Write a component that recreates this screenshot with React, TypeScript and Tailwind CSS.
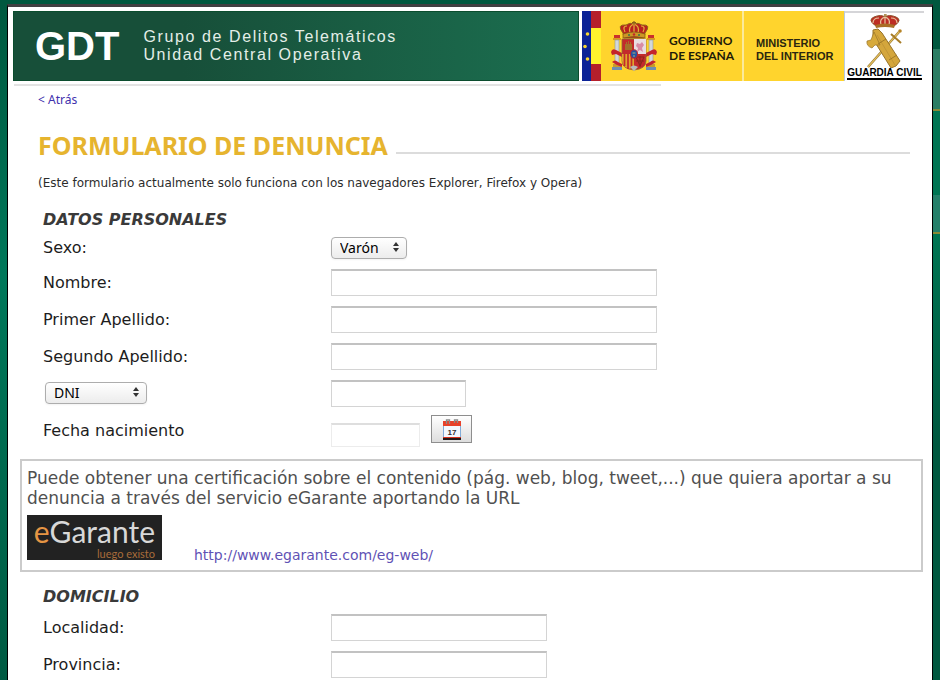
import type { ReactNode } from "react";

function SpainArms() {
  return (
    <svg viewBox="0 0 46 50" className="h-[50px] w-[46px] shrink-0" aria-hidden="true">
      {/* columns of Hercules */}
      {[3, 37].map((x) => (
        <g key={x}>
          <rect x={x} y="14" width="6" height="3" fill="#c9302c" />
          <rect x={x - 1} y="17" width="8" height="2" fill="#d99a1c" />
          <rect x={x + 1} y="19" width="4" height="26" fill="#d3d8da" stroke="#8d979b" strokeWidth=".6" />
          <rect x={x - 1} y="43" width="8" height="3" fill="#c79a2c" />
          <rect x={x - 2} y="46" width="10" height="3" fill="#6f8fb0" />
        </g>
      ))}
      <path d="M0 31q1-4 5-2l6 3v4l-6-3-4 1zM46 31q-1-4-5-2l-6 3v4l6-3 4 1z" fill="#c4242c" />
      <path d="M1 41q3-3 6 0l4 2v3l-5-2zM45 41q-3-3-6 0l-4 2v3l5-2z" fill="#c4242c" />
      {/* crown */}
      <path d="M12 12Q5 3 15 4q4-3 8-1 4-2 8 1 10-1 3 8l-1 5H13z" fill="#b9211f" stroke="#92671a" strokeWidth="1" />
      <path d="M14 11Q11 5 16 5m3 7q-2-7 4-9 6 2 4 9m5-1q3-6-2-6M23 3v9" fill="none" stroke="#e4b13a" strokeWidth="1.2" />
      <path d="M23 0v4M21 1.500h4" stroke="#8b6118" strokeWidth="1.200" />
      <path d="M12 13q11-4 22 0v4q-11-3-22 0z" fill="#cc9626" stroke="#7d5513" strokeWidth=".7" />
      <circle cx="18" cy="14" r="1" fill="#327a4b" />
      <circle cx="23" cy="13.500" r="1.200" fill="#c4242c" />
      <circle cx="28" cy="14" r="1" fill="#327a4b" />
      {/* shield */}
      <path d="M11 18h24v22q0 8-12 9-12-1-12-9z" fill="#c32a2b" stroke="#8d6a3c" strokeWidth=".8" />
      <path d="M23 18h12v15H23z" fill="#e9dde2" />
      <path d="M26 22l3 1 2-2 2 3-2 3 1 4-3-2-3 2 1-4-2-2z" fill="#d88ca6" />
      <path d="M14 29v-6h1v-2h1v2h1v-3h1v3h1v-2h1v2h1v6z" fill="#a3702b" />
      <path d="M11 33h12v15.500q-12-1-12-9z" fill="#dfa52c" />
      <path d="M13.500 33v12M17 33v15M20.500 33v15" stroke="#c32a2b" strokeWidth="1.700" />
      <path d="M25 36h8l-4 9zM29 35v11M25 40h8" fill="none" stroke="#8a271d" strokeWidth="1" />
      <path d="M19 46q4-3 8 0l-4 4z" fill="#b9b9b9" />
      <ellipse cx="23" cy="33" rx="3.500" ry="4.200" fill="#2154a4" stroke="#c4242c" />
      <path d="M21.500 32h3M22 35h2" stroke="#dac66c" strokeWidth=".8" />
    </svg>
  );
}

function GuardiaEmblem() {
  return (
    <svg viewBox="0 0 40 54" className="h-[54px] w-10" aria-hidden="true">
      {/* crown */}
      <path d="M11 12Q2 6 9 3q7-3 11 0 4-3 11 0 7 3-2 9z" fill="#bd2e24" stroke="#8f542e" strokeWidth="1" />
      <path d="M8 9q0-5 6-5m2 7q-2-6 4-8 6 2 4 8m2-7q6 0 6 5M20 3v8" fill="none" stroke="#e6c6a0" strokeWidth="1.200" />
      <path d="M20 0v3M19 1h3" stroke="#977023" />
      <path d="M10 11q10-3 20 0l-1 3q-9-2-18 0z" fill="#a96e25" />
      {/* sword */}
      <path d="M34 18L3 53" stroke="#8e6a24" strokeWidth="2.400" />
      <path d="M34 18L3 53" stroke="#e0bd5c" strokeWidth="1.300" />
      <path d="M26 20l10 9" stroke="#a77c26" strokeWidth="2" />
      <circle cx="35" cy="17" r="1.800" fill="#b68427" />
      {/* fasces and axe */}
      <path d="M8 16l5-1 4 4 18 28-4 5-5 2L8 25z" fill="#d4a63c" stroke="#98742a" strokeWidth="1" />
      <path d="M12 21l18 30" stroke="#b48a30" strokeWidth=".6" />
      <path d="M9 18l-3 8-4 1q-1 5 5 7l3-3 5 0z" fill="#d7aa3b" stroke="#98742a" strokeWidth=".7" />
      <path d="M13 30l8-5M24 46l8-5" stroke="#a07a28" strokeWidth="1" />
    </svg>
  );
}

function CalendarIcon() {
  return (
    <svg viewBox="0 0 18 21" className="h-[21px] w-[18px]" aria-hidden="true">
      <rect x=".5" y="2.500" width="17" height="18" fill="#f4f9ff" stroke="#82acd8" />
      <path d="M0 2h18v5H0z" fill="#e8412a" />
      <path d="M0 18h18v1H0z" fill="#d9331f" />
      <path d="M0 19h18v2H0z" fill="#241a1a" />
      <path d="M3.500 5V1h3v4M11.500 4V1h3v3" fill="none" stroke="#8b8b8b" strokeWidth="1.300" />
      <text x="9" y="16" textAnchor="middle" fontFamily="Liberation Sans, sans-serif" fontWeight="700" fontSize="8" fill="#333">
        17
      </text>
    </svg>
  );
}

function Header() {
  return (
    <header className="mr-2 ml-[5px] flex h-[70px] gap-[3px] font-['Liberation_Sans',Arial,sans-serif]">
      <div className="flex min-w-0 flex-1 items-center gap-6 border border-[#0b4d2e] bg-linear-to-r from-[#174f39] from-30% to-[#1b6f50] pl-[21px] text-white">
        <span className="text-[40px] leading-10 font-bold">GDT</span>
        <p className="text-base leading-[18px] tracking-widest whitespace-nowrap text-[#e4eee8]">
          Grupo de Delitos Telemáticos
          <br />
          Unidad Central Operativa
        </p>
      </div>
      <div className="flex">
        <div className="w-[9px] bg-[#0b2296]">
          <svg viewBox="0 0 9 70" className="h-[70px] w-[9px]" aria-hidden="true">
            <g fill="#f7d531">
              <circle cx="5.500" cy="23" r="1.800" />
              <circle cx="3" cy="35.500" r="1.800" />
              <circle cx="5.500" cy="48" r="1.800" />
            </g>
          </svg>
        </div>
        <div className="w-[10px] border-y-[17px] border-[#b51f2b] bg-[#fff22d]" />
        <div className="flex w-[143px] items-center border-r-2 border-[#fbea9b] bg-[#ffd42d] pl-[10px]">
          <SpainArms />
          <span className="pt-1 pl-3 font-['Lato',sans-serif] text-xs leading-[15px] font-bold whitespace-nowrap text-[#1d1a08]">
            GOBIERNO
            <br />
            DE ESPAÑA
          </span>
        </div>
        <div className="flex w-[101px] items-center border-r border-[#b9cbe0] bg-[#ffd42d] pt-2 pl-3 text-[11px] leading-[13px] font-bold whitespace-nowrap text-[#2b270f]">
          MINISTERIO
          <br />
          DEL INTERIOR
        </div>
        <div className="flex w-[79px] flex-col items-center border-t-2 border-[#d5d5d8] pt-px">
          <GuardiaEmblem />
          <span className="border-b-2 border-black text-[10px] leading-[10px] font-bold whitespace-nowrap text-black">GUARDIA CIVIL</span>
        </div>
      </div>
    </header>
  );
}

function Picker({ id, label, options, className }: { id: string; label?: string; options: string[]; className: string }) {
  return (
    <span className={`relative inline-block ${className}`}>
      <select
        id={id}
        aria-label={label}
        className="h-[22px] w-full appearance-none rounded-[4px] border border-[#adadad] bg-linear-to-b from-white to-[#ececec] pl-2 font-['Noto_Sans',sans-serif] text-sm leading-5 text-black shadow-xs"
      >
        {options.map((o) => (
          <option key={o}>{o}</option>
        ))}
      </select>
      <svg viewBox="0 0 6 10" className="pointer-events-none absolute top-[6px] right-2 h-[10px] w-[6px]" aria-hidden="true">
        <path d="M3 0l3 4H0zM3 10l3-4H0z" fill="#333" />
      </svg>
    </span>
  );
}

const row = "grid grid-cols-[288px_1fr] items-center pl-[35px]";
const box = "border border-[#d4d4d4] border-t-2 border-t-[#c2c2c2] bg-white px-2 text-base";

function Field({ id, label, width, children }: { id: string; label: string; width?: string; children?: ReactNode }) {
  return (
    <div className={`${row} h-[37px]`}>
      <label htmlFor={id}>{label}</label>
      {children ?? <input id={id} type="text" className={`${box} h-[27px] ${width}`} />}
    </div>
  );
}

export default function App() {
  return (
    <div className="flex min-h-screen border-t-4 border-[#00583f] font-['DejaVu_Sans',Verdana,sans-serif]">
      <div className="w-[7px] shrink-0 bg-linear-to-b from-[#00583f] via-[#00785a] via-40% to-[#005a42]" />
      <main className="min-w-0 flex-1 border-x border-t-[3px] border-black border-t-[#413f42] bg-white pt-1 text-base text-[#1d1d1d]">
        <Header />
        <div className="mt-[3px] ml-[6px] h-[2px] w-[70%] bg-[#e3e3e3]" />
        <nav className="pt-[5px] pl-[30px] font-['Noto_Sans',sans-serif] text-xs leading-[18px]">
          <a href="#atras" className="text-[#4030ad]">
            &lt; Atrás
          </a>
        </nav>

        <div className="mt-[18px] mr-[22px] ml-[30px] flex items-center gap-2">
          <h1 className="font-['Noto_Sans',sans-serif] text-[25px] leading-9 font-bold whitespace-nowrap text-[#e6b42f]">FORMULARIO DE DENUNCIA</h1>
          <div className="mt-4 h-[2px] flex-1 bg-[#dcdcdc]" />
        </div>
        <p className="mt-3 pl-[30px] text-xs leading-4 text-[#2c2c2c]">
          (Este formulario actualmente solo funciona con los navegadores Explorer, Firefox y Opera)
        </p>

        <form>
          <h2 className="mt-[17px] pl-[35px] text-base leading-6 font-bold text-[#3a3a3a] italic">DATOS PERSONALES</h2>
          <div className={`${row} h-8`}>
            <label htmlFor="sexo">Sexo:</label>
            <Picker id="sexo" options={["Varón", "Mujer"]} className="w-[76px]" />
          </div>
          <Field id="nombre" label="Nombre:" width="w-[326px]" />
          <Field id="apellido1" label="Primer Apellido:" width="w-[326px]" />
          <Field id="apellido2" label="Segundo Apellido:" width="w-[326px]" />
          <div className={`${row} h-9`}>
            <Picker id="documento" label="Tipo de documento" options={["DNI", "NIE", "Pasaporte"]} className="ml-[2px] w-[102px]" />
            <input aria-label="Número de documento" type="text" className={`${box} h-[27px] w-[135px]`} />
          </div>
          <div className={`${row} h-10`}>
            <label htmlFor="fecha">Fecha nacimiento</label>
            <div className="flex items-end gap-[11px]">
              <input id="fecha" type="text" className="mt-2 h-6 w-[89px] border border-t-2 border-[#ececec] border-t-[#dedede] px-1 text-sm" />
              <button
                type="button"
                aria-label="Elegir fecha"
                className="mb-1 flex h-7 w-[41px] items-center justify-center border border-[#8e8e8e] bg-linear-to-b from-white to-[#dddddd]"
              >
                <CalendarIcon />
              </button>
            </div>
          </div>

          <section className="mt-2 mr-[9px] ml-3 border-2 border-[#cbcbcb] px-[5px] pt-[7px] pb-[10px] text-[#505050]">
            <p className="text-[17px] leading-5">
              Puede obtener una certificación sobre el contenido (pág. web, blog, tweet,...) que quiera aportar a su denuncia a través del servicio
              eGarante aportando la URL
            </p>
            <div className="mt-[7px] flex items-end gap-8">
              <div className="flex h-[45px] w-[135px] flex-col items-end bg-[#222222] pr-[7px] font-['Lato',sans-serif]">
                <span className="text-[30px] leading-[33px] text-[#d8d8d8]">
                  <span className="text-[#e69544]">e</span>Garante
                </span>
                <span className="text-[11px] leading-[11px] text-[#a86c3a]">luego existo</span>
              </div>
              <a href="http://www.egarante.com/eg-web/" className="-mb-1 text-sm leading-[18px] text-[#5f52b5]">
                http://www.egarante.com/eg-web/
              </a>
            </div>
          </section>

          <h2 className="mt-[13px] pl-[35px] text-base leading-6 font-bold text-[#3a3a3a] italic">DOMICILIO</h2>
          <Field id="localidad" label="Localidad:" width="w-[216px]" />
          <Field id="provincia" label="Provincia:" width="w-[216px]" />
        </form>
      </main>
      <div className="w-[7px] shrink-0 bg-[linear-gradient(#00583f_0_45px,#2b7d63_45px_105px,#8a8a35_105px_107px,#007553_107px_191px,#25806a_191px_228px,#8a8a35_228px_230px,#007553_230px,#00583f_440px)]" />
    </div>
  );
}
